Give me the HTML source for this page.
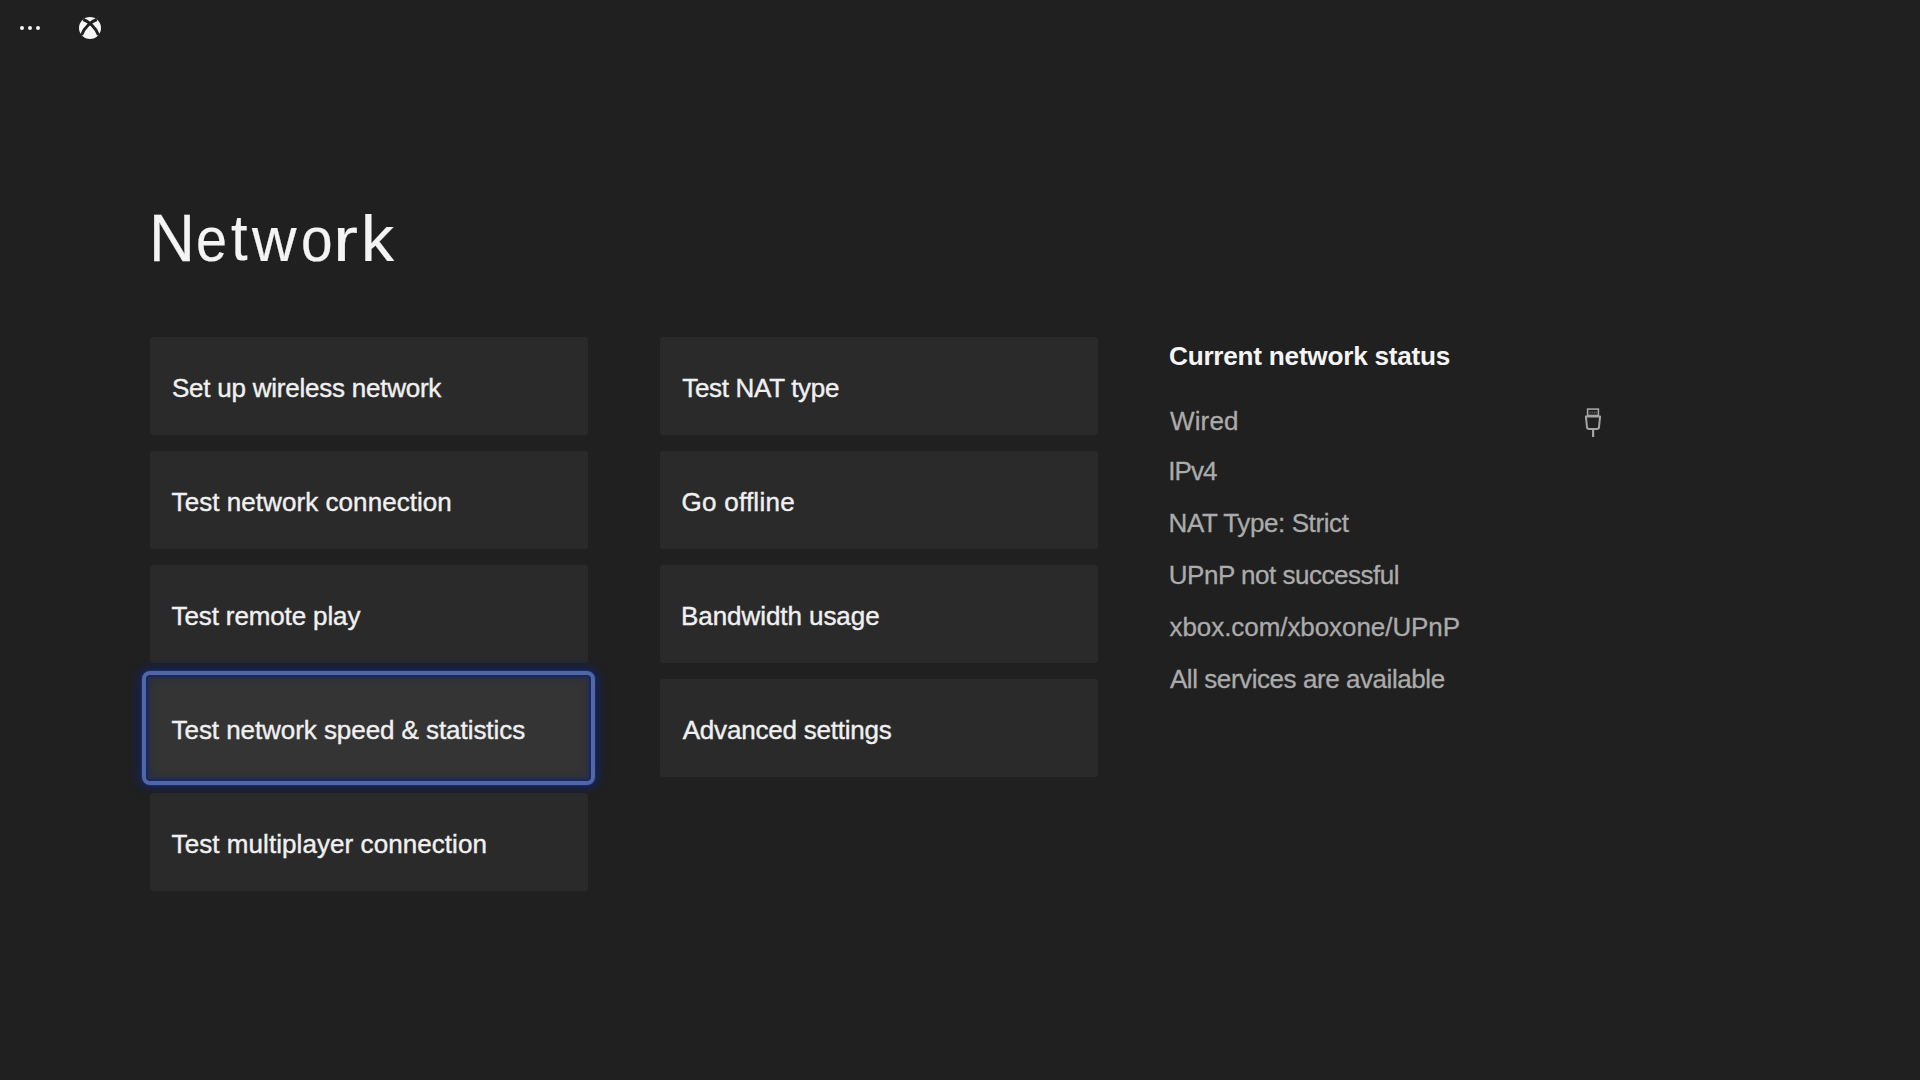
<!DOCTYPE html>
<html>
<head>
<meta charset="utf-8">
<style>
html,body{margin:0;padding:0;}
body{width:1920px;height:1080px;background:#202020;position:relative;overflow:hidden;font-family:"Liberation Sans",sans-serif;}
.abs{position:absolute;}
.dot{position:absolute;width:4.6px;height:4.6px;border-radius:50%;background:#f2f2f2;top:25.6px;}
.title span{position:absolute;font-size:67px;line-height:80px;color:#f4f4f4;white-space:nowrap;transform-origin:0 0;-webkit-text-stroke:0.25px #f4f4f4;}
.card{position:absolute;width:438px;height:98px;background:#2a2a2a;border-radius:3px;}
.card span{position:absolute;left:22px;top:2px;line-height:98px;font-size:26px;color:#f0f0f0;white-space:nowrap;-webkit-text-stroke:0.4px #f0f0f0;}
.focus{position:absolute;left:142px;top:671px;width:445px;height:106px;border:4px solid #5266a6;border-radius:8px;background:#343434;box-shadow:0 0 0 1px rgba(24,44,110,0.95),0 0 10px 4px rgba(16,36,110,0.7), inset 0 0 0 2px rgba(22,40,100,0.95), inset 0 0 6px 3px rgba(20,38,95,0.6);}
.focus span{position:absolute;left:26px;top:2px;line-height:106px;font-size:26px;color:#f0f0f0;white-space:nowrap;-webkit-text-stroke:0.4px #f0f0f0;}
.hdr{position:absolute;left:1169px;top:339.5px;font-size:26.2px;line-height:32px;font-weight:bold;color:#f4f4f4;white-space:nowrap;letter-spacing:-0.253px;}
.st{position:absolute;left:1170px;font-size:26px;line-height:32px;color:#ababab;white-space:nowrap;-webkit-text-stroke:0.3px #ababab;}
</style>
</head>
<body>
<div class="dot" style="left:19.6px"></div>
<div class="dot" style="left:27.7px"></div>
<div class="dot" style="left:35.8px"></div>
<svg class="abs" style="left:79px;top:16.7px" width="22" height="22" viewBox="0 0 22 22">
  <circle cx="11" cy="11" r="11" fill="#f6f6f6"/>
  <path d="M4.2 2.5 C9 4.2 16 9.2 19.4 18" fill="none" stroke="#202020" stroke-width="3"/>
  <path d="M17.8 2.5 C13 4.2 6 9.2 2.6 18" fill="none" stroke="#202020" stroke-width="3"/>
  <rect x="9.6" y="5" width="2.8" height="3" fill="#202020"/>
</svg>

<div class="title"><span style="left:149.19px;top:197.73px;transform:scale(0.9488,1.0041)">N</span><span style="left:196.11px;top:202.35px;transform:scale(0.8315,0.9304)">e</span><span style="left:230.90px;top:199.46px;transform:scale(0.8884,0.9747)">t</span><span style="left:252.32px;top:201.79px;transform:scale(0.9191,0.9397)">w</span><span style="left:300.61px;top:202.34px;transform:scale(0.8470,0.9309)">o</span><span style="left:333.01px;top:202.31px;transform:scale(1.1200,0.9315)">r</span><span style="left:361.28px;top:199.85px;transform:scale(0.9857,0.9706)">k</span></div>

<div class="card" style="left:150px;top:337px"><span style="left:21.9px;letter-spacing:-0.231px">Set up wireless network</span></div>
<div class="card" style="left:150px;top:451px"><span style="left:21.6px;letter-spacing:0.059px">Test network connection</span></div>
<div class="card" style="left:150px;top:565px"><span style="left:21.6px;letter-spacing:-0.128px">Test remote play</span></div>
<div class="focus"><span style="left:25.6px;letter-spacing:-0.065px">Test network speed &amp; statistics</span></div>
<div class="card" style="left:150px;top:793px"><span style="left:21.6px;letter-spacing:0.067px">Test multiplayer connection</span></div>
<div class="card" style="left:660px;top:337px"><span style="left:22.24px;letter-spacing:-0.307px">Test NAT type</span></div>
<div class="card" style="left:660px;top:451px"><span style="left:21.51px;letter-spacing:0.252px">Go offline</span></div>
<div class="card" style="left:660px;top:565px"><span style="left:21.03px;letter-spacing:-0.064px">Bandwidth usage</span></div>
<div class="card" style="left:660px;top:679px"><span style="left:22.72px;letter-spacing:-0.209px">Advanced settings</span></div>

<div class="hdr">Current network status</div>
<div class="st" style="top:404.65px;left:1169.93px;letter-spacing:0.181px">Wired</div>
<div class="st" style="top:454.65px;left:1168.2px;letter-spacing:-0.892px">IPv4</div>
<div class="st" style="top:506.65px;left:1168.5px;letter-spacing:-0.401px">NAT Type: Strict</div>
<div class="st" style="top:558.65px;left:1168.76px;letter-spacing:-0.475px">UPnP not successful</div>
<div class="st" style="top:610.65px;left:1169.54px;letter-spacing:-0.068px">xbox.com/xboxone/UPnP</div>
<div class="st" style="top:662.65px;left:1169.93px;letter-spacing:-0.436px">All services are available</div>

<svg class="abs" style="left:1583px;top:406px" width="20" height="33" viewBox="0 0 20 33">
  <rect x="4.6" y="3.1" width="10.8" height="6.4" fill="none" stroke="#a4a4a4" stroke-width="1.6"/>
  <path d="M7 5.6 V7.4 M9.2 5.6 V7.4 M11.4 5.6 V7.4 M13.2 5.6 V7.4" stroke="#7a7a7a" stroke-width="0.8"/>
  <path d="M2.9 10.4 H17.1 L16 21.2 Q15.8 23.1 14 23.1 H6 Q4.2 23.1 4 21.2 Z" fill="none" stroke="#a4a4a4" stroke-width="2" stroke-linejoin="round"/>
  <rect x="9" y="23" width="2.2" height="8" fill="#a4a4a4"/>
</svg>
</body>
</html>
